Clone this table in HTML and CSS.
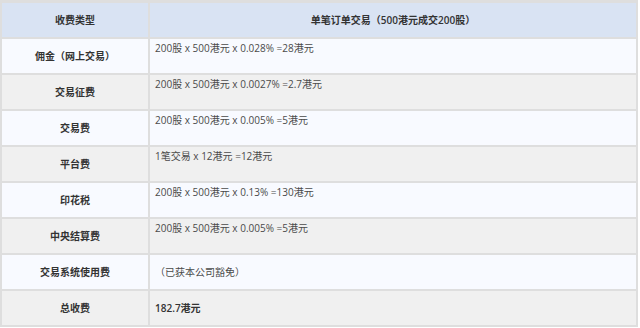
FILE: index.html
```html
<!DOCTYPE html>
<html lang="zh-CN">
<head>
<meta charset="utf-8">
<link rel="stylesheet" href="styles.css">
</head>
<body>
<table class="fees">
  <thead>
    <tr class="head">
      <th class="type">收费类型</th>
      <th class="calc">单笔订单交易（500港元成交200股）</th>
    </tr>
  </thead>
  <tbody>
    <tr class="odd"><th class="type">佣金（网上交易）</th><td class="calc">200股 x 500港元 x 0.028% =28港元</td></tr>
    <tr class="even"><th class="type">交易征费</th><td class="calc">200股 x 500港元 x 0.0027% =2.7港元</td></tr>
    <tr class="odd"><th class="type">交易费</th><td class="calc">200股 x 500港元 x 0.005% =5港元</td></tr>
    <tr class="even"><th class="type">平台费</th><td class="calc">1笔交易 x 12港元 =12港元</td></tr>
    <tr class="odd"><th class="type">印花税</th><td class="calc">200股 x 500港元 x 0.13% =130港元</td></tr>
    <tr class="even"><th class="type">中央结算费</th><td class="calc">200股 x 500港元 x 0.005% =5港元</td></tr>
    <tr class="odd"><th class="type">交易系统使用费</th><td class="calc mid">（已获本公司豁免）</td></tr>
    <tr class="even"><th class="type">总收费</th><td class="calc mid total">182.7港元</td></tr>
  </tbody>
</table>
</body>
</html>
```
FILE: styles.css
```css
html, body {
  margin: 0;
  padding: 0;
  background: #ffffff;
}
body {
  font-family: "Open Sans", "Noto Sans CJK SC", sans-serif;
  font-size: 10px;
  color: #4a4a4a;
}
.fees {
  width: 638px;
  border-collapse: separate;
  border-spacing: 2px;
  border-top: 1px solid #dedede;
  background: #dedede;
  table-layout: fixed;
}
.fees th, .fees td {
  height: 34px;
  padding: 0 5px;
  box-sizing: border-box;
  line-height: 18px;
}
.type {
  width: 146px;
  text-align: center;
  vertical-align: middle;
  font-weight: 600;
  color: #333;
}
.calc {
  text-align: left;
  vertical-align: top;
  font-weight: normal;
  padding-top: 1px;
}
.head th {
  background: #d9e3f3;
  text-align: center;
  vertical-align: middle;
  font-weight: 600;
  color: #333;
}
.odd th, .odd td { background: #f8faff; }
.even th, .even td { background: #f0f0f0; }
.calc.mid { vertical-align: middle; padding-top: 0; }
.calc.total { font-weight: 600; color: #333; }
```
